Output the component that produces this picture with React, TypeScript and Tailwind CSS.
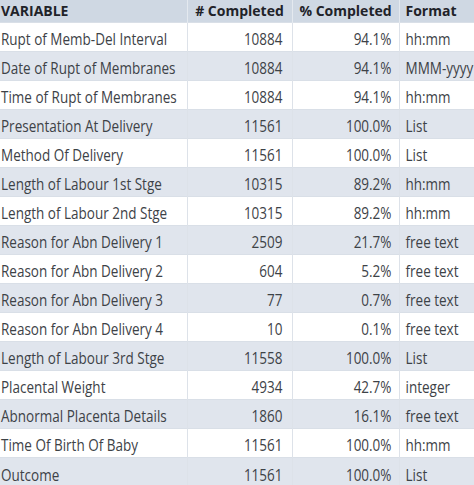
import React from "react";

const rows: [string, string, string, string][] = [
  ["Rupt of Memb-Del Interval", "10884", "94.1%", "hh:mm"],
  ["Date of Rupt of Membranes", "10884", "94.1%", "MMM-yyyy"],
  ["Time of Rupt of Membranes", "10884", "94.1%", "hh:mm"],
  ["Presentation At Delivery", "11561", "100.0%", "List"],
  ["Method Of Delivery", "11561", "100.0%", "List"],
  ["Length of Labour 1st Stge", "10315", "89.2%", "hh:mm"],
  ["Length of Labour 2nd Stge", "10315", "89.2%", "hh:mm"],
  ["Reason for Abn Delivery 1", "2509", "21.7%", "free text"],
  ["Reason for Abn Delivery 2", "604", "5.2%", "free text"],
  ["Reason for Abn Delivery 3", "77", "0.7%", "free text"],
  ["Reason for Abn Delivery 4", "10", "0.1%", "free text"],
  ["Length of Labour 3rd Stge", "11558", "100.0%", "List"],
  ["Placental Weight", "4934", "42.7%", "integer"],
  ["Abnormal Placenta Details", "1860", "16.1%", "free text"],
  ["Time Of Birth Of Baby", "11561", "100.0%", "hh:mm"],
  ["Outcome", "11561", "100.0%", "List"],
];

function T({ children }: { children: React.ReactNode }) {
  return <span className="inline-block translate-y-[3px] scale-y-[1.2] whitespace-nowrap">{children}</span>;
}

export default function App() {
  return (
    <div className="w-[474px] h-[485px] overflow-hidden bg-white" style={{ fontFamily: '"Open Sans", "Noto Sans", sans-serif' }}>
      <table className="w-[520px] border-collapse table-fixed">
        <colgroup>
          <col className="w-[187px]" />
          <col className="w-[105px]" />
          <col className="w-[107px]" />
          <col className="w-[121px]" />
        </colgroup>
        <thead>
          <tr className="h-[22px] bg-[#cfd8e3] text-[#1f2329] font-bold text-[14px]">
            <th className="text-left pl-[1px] leading-[21px] border-r border-[#e4e9ef]">VARIABLE</th>
            <th className="text-center leading-[21px] border-r border-[#e4e9ef]"># Completed</th>
            <th className="text-center leading-[21px] border-r border-[#e4e9ef]">% Completed</th>
            <th className="text-left pl-[6px] leading-[21px]">Format</th>
          </tr>
        </thead>
        <tbody className="text-[#3d4247] text-[13.5px]">
          {rows.map((r, i) => (
            <tr key={i} className={`h-[29px] border-t border-[#d9dfe7] ${i % 2 === 1 ? "bg-[#e0e5ed]" : "bg-white"}`}>
              <td className="pl-[1px] whitespace-nowrap border-r border-[#dde2e9]"><T>{r[0]}</T></td>
              <td className="text-right pr-[9px] border-r border-[#dde2e9]"><T>{r[1]}</T></td>
              <td className="text-right pr-[7px] border-r border-[#dde2e9]"><T>{r[2]}</T></td>
              <td className="pl-[6px] whitespace-nowrap"><T>{r[3]}</T></td>
            </tr>
          ))}
        </tbody>
      </table>
    </div>
  );
}
